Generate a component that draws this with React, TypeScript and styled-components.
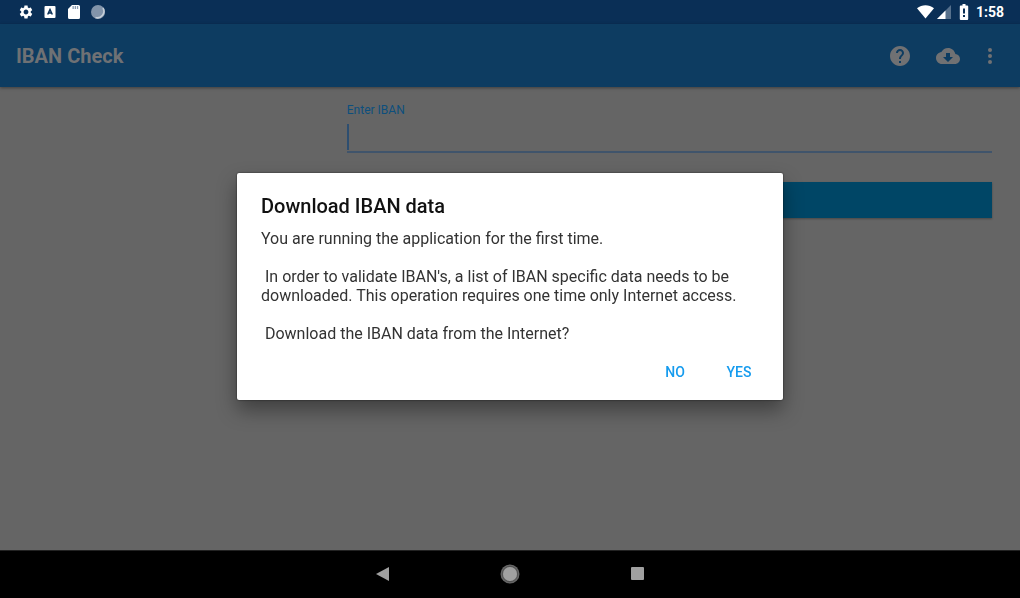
import React from "react";
import styled, { createGlobalStyle } from "styled-components";

const GlobalStyle = createGlobalStyle`
  *, *::before, *::after { box-sizing: border-box; }
  body {
    margin: 0;
    background: #656565;
    font-family: Roboto, "Liberation Sans", sans-serif;
  }
  button, input { font-family: inherit; }
`;

const Screen = styled.div`
  display: flex;
  flex-direction: column;
  min-height: 100vh;
`;

const StatusBar = styled.header`
  display: flex;
  align-items: center;
  justify-content: space-between;
  height: 24px;
  padding: 0 16px 0 18px;
  background: #0a2f56;
  color: #fff;
`;

const StatusGroup = styled.div<{ $gap: number }>`
  display: flex;
  align-items: center;
  gap: ${(p) => p.$gap}px;
`;

const Clock = styled.time`
  padding-left: 4px;
  font-size: 14px;
  font-weight: 700;
  line-height: 24px;
`;

const Icon = styled.svg`
  display: block;
  flex: none;
  fill: currentColor;
`;

const AppBar = styled.div`
  display: flex;
  align-items: center;
  justify-content: space-between;
  height: 63px;
  padding: 0 20px 0 16px;
  background: #0d3c61;
  color: #6f7174;
  box-shadow: 0 1px 3px rgba(0, 0, 0, 0.4);
`;

const AppTitle = styled.h1`
  margin: 0;
  font-size: 20px;
  font-weight: 700;
  line-height: 24px;
`;

const Actions = styled.div`
  display: flex;
  align-items: center;
  gap: 24px;
`;

const IconButton = styled.button<{ $narrow?: boolean }>`
  display: flex;
  align-items: center;
  justify-content: center;
  width: ${(p) => (p.$narrow ? 16 : 24)}px;
  height: 24px;
  padding: 0;
  border: 0;
  background: none;
  color: #707173;
`;

const Main = styled.main`
  flex: 1;
  padding: 15px 28px 16px 34%;
`;

const Field = styled.div`
  display: flex;
  flex-direction: column;
`;

const Label = styled.label`
  color: #0d4f7d;
  font-size: 12px;
  line-height: 16px;
`;

const InputLine = styled.div`
  display: flex;
  align-items: center;
  height: 35px;
  border-bottom: 2px solid #40546b;
`;

const Caret = styled.span`
  width: 2px;
  height: 26px;
  margin-top: 4px;
  background: #2d4e70;
`;

const TextInput = styled.input`
  flex: 1;
  min-width: 0;
  height: 32px;
  padding: 0;
  border: 0;
  outline: 0;
  background: none;
  color: #111;
  font-size: 18px;
`;

const CheckButton = styled.button`
  display: block;
  width: 100%;
  height: 36px;
  margin-top: 29px;
  border: 0;
  background: #004666;
  box-shadow: 0 1px 2px rgba(0, 0, 0, 0.3);
`;

const NavBar = styled.nav`
  display: flex;
  align-items: center;
  justify-content: center;
  gap: 104px;
  height: 48px;
  padding-bottom: 2px;
  border-top: 1px solid #222;
  background: #000;
`;

const Overlay = styled.div`
  position: fixed;
  inset: 24px 0 49px;
  display: flex;
  align-items: center;
  justify-content: center;
  padding: 16px;
`;

const Dialog = styled.section`
  width: 100%;
  max-width: 546px;
  padding: 20px 12px 10px 24px;
  border-radius: 2px;
  background: #fff;
  box-shadow: 0 0 2px rgba(0, 0, 0, 0.7), 0 10px 20px rgba(0, 0, 0, 0.38);
`;

const DialogTitle = styled.h2`
  margin: 0;
  color: #111;
  font-size: 20px;
  font-weight: 500;
  line-height: 26px;
`;

const Message = styled.p`
  margin: 10px 0 0;
  color: #333;
  font-size: 16px;
  line-height: 19px;
  white-space: pre-wrap;
`;

const DialogActions = styled.div`
  display: flex;
  justify-content: flex-end;
  margin-top: 11px;
`;

const DialogButton = styled.button`
  width: 64px;
  height: 36px;
  padding: 0;
  border: 0;
  background: none;
  color: #159bee;
  font-size: 14px;
  font-weight: 500;
`;

const MESSAGE = [
  "You are running the application for the first time.",
  " In order to validate IBAN's, a list of IBAN specific data needs to be downloaded. This operation requires one time only Internet access.",
  " Download the IBAN data from the Internet?",
].join("\n\n");

const GEAR =
  "M19.14 12.94c.04-.3.06-.61.06-.94 0-.32-.02-.64-.07-.94l2.03-1.58c.18-.14.23-.41.12-.61l-1.92-3.32c-.12-.22-.37-.29-.59-.22l-2.39.96c-.5-.38-1.03-.7-1.62-.94L14.4 2.81c-.04-.24-.24-.41-.48-.41h-3.84c-.24 0-.43.17-.47.41L9.25 5.35c-.59.24-1.13.57-1.62.94l-2.39-.96c-.22-.08-.47 0-.59.22L2.74 8.87c-.12.21-.08.47.12.61l2.03 1.58c-.05.3-.09.63-.09.94s.02.64.07.94l-2.03 1.58c-.18.14-.23.41-.12.61l1.92 3.32c.12.22.37.29.59.22l2.39-.96c.5.38 1.03.7 1.62.94l.36 2.54c.05.24.24.41.48.41h3.84c.24 0 .44-.17.47-.41l.36-2.54c.59-.24 1.13-.56 1.62-.94l2.39.96c.22.08.47 0 .59-.22l1.92-3.32c.12-.22.07-.47-.12-.61l-2.01-1.58zM12 15.6c-1.98 0-3.6-1.62-3.6-3.6s1.62-3.6 3.6-3.6 3.6 1.62 3.6 3.6-1.62 3.6-3.6 3.6z";

export default function App() {
  return (
    <>
      <GlobalStyle />
      <Screen>
        <StatusBar>
          <StatusGroup $gap={8}>
            <Icon width="16" height="16" viewBox="0 0 24 24">
              <path d={GEAR} />
            </Icon>
            <Icon width="16" height="16" viewBox="0 0 16 16">
              <rect x="2.5" y="2" width="11" height="12" rx="1" />
              <path d="M5.7 10.500 8 5.500 10.300 10.500M6.500 9h3" fill="none" stroke="#0a2f56" strokeWidth="1.500" />
            </Icon>
            <Icon width="16" height="16" viewBox="0 0 16 16">
              <path d="M6 1h6.500a1.500 1.500 0 0 1 1.500 1.500v11a1.500 1.500 0 0 1-1.500 1.500h-9A1.500 1.500 0 0 1 2 13.500V5z" />
              <path d="M6.500 2h1.300v3H6.500zM8.700 2H10v3H8.700zM10.900 2h1.300v3h-1.300z" fill="#8b9db2" />
            </Icon>
            <Icon width="16" height="16" viewBox="0 0 16 16">
              <circle cx="8" cy="8" r="7" fill="#8294aa" />
              <path d="M13 4a6.500 6.500 0 0 1-7.500 9.500" fill="none" stroke="#c5ced8" strokeWidth="1.600" />
            </Icon>
          </StatusGroup>
          <StatusGroup $gap={2}>
            <Icon width="18" height="16" viewBox="0 0 18 16">
              <path d="M1 4.200C6 .2 13 .2 18 4.200L9.500 14.500z" />
            </Icon>
            <Icon width="16" height="16" viewBox="0 0 16 16">
              <path d="M15 1v14H1z" fill="#56708c" />
              <path d="M9.500 6.500V15H1z" />
            </Icon>
            <Icon width="16" height="18" viewBox="0 0 16 18">
              <path d="M8.500 1h3v1.500h1.700q1 0 1 1V16q0 1-1 1H6.800q-1 0-1-1V3.500q0-1 1-1h1.700z" />
              <path d="M9 5.500h2v5H9zM9 12h2v2H9z" fill="#0a2f56" />
            </Icon>
            <Clock>1:58</Clock>
          </StatusGroup>
        </StatusBar>

        <AppBar>
          <AppTitle>IBAN Check</AppTitle>
          <Actions>
            <IconButton aria-label="Help">
              <Icon width="24" height="24" viewBox="0 0 24 24">
                <path d="M12 2C6.480 2 2 6.480 2 12s4.480 10 10 10 10-4.480 10-10S17.520 2 12 2zm1 17h-2v-2h2v2zm2.070-7.750-.9.920C13.450 12.900 13 13.500 13 15h-2v-.5c0-1.100.45-2.100 1.170-2.830l1.240-1.260c.37-.36.59-.86.59-1.410 0-1.100-.9-2-2-2s-2 .9-2 2H8c0-2.210 1.790-4 4-4s4 1.790 4 4c0 .88-.36 1.680-.93 2.250z" />
              </Icon>
            </IconButton>
            <IconButton aria-label="Download data">
              <Icon width="24" height="24" viewBox="0 0 24 24">
                <path d="M19.350 10.040C18.670 6.590 15.640 4 12 4 9.110 4 6.600 5.640 5.350 8.040 2.340 8.360 0 10.910 0 14c0 3.310 2.690 6 6 6h13c2.760 0 5-2.240 5-5 0-2.640-2.050-4.780-4.650-4.960zM17 13l-5 5-5-5h3V9h4v4h3z" />
              </Icon>
            </IconButton>
            <IconButton $narrow aria-label="More options">
              <Icon width="16" height="24" viewBox="4 0 16 24">
                <circle cx="10" cy="6" r="2" />
                <circle cx="10" cy="12" r="2" />
                <circle cx="10" cy="18" r="2" />
              </Icon>
            </IconButton>
          </Actions>
        </AppBar>

        <Main>
          <Field>
            <Label htmlFor="iban">Enter IBAN</Label>
            <InputLine>
              <Caret />
              <TextInput id="iban" type="text" />
            </InputLine>
          </Field>
          <CheckButton aria-label="Check IBAN" />
        </Main>

        <NavBar>
          <IconButton aria-label="Back">
            <Icon width="24" height="24" viewBox="0 0 24 24">
              <path d="M6 12 19 5v14z" fill="#a0a0a0" />
            </Icon>
          </IconButton>
          <IconButton aria-label="Home">
            <Icon width="24" height="24" viewBox="0 0 24 24">
              <circle cx="12" cy="12" r="9.500" fill="#666" />
              <circle cx="12" cy="12" r="7.700" fill="none" stroke="#505050" strokeWidth="1" />
              <circle cx="12" cy="12" r="7" fill="#a0a0a0" />
            </Icon>
          </IconButton>
          <IconButton aria-label="Recent apps">
            <Icon width="24" height="24" viewBox="0 0 24 24">
              <rect x="5" y="5" width="13" height="13" rx="1" fill="#a0a0a0" />
            </Icon>
          </IconButton>
        </NavBar>
      </Screen>

      <Overlay>
        <Dialog role="dialog" aria-modal="true" aria-labelledby="dialog-title">
          <DialogTitle id="dialog-title">Download IBAN data</DialogTitle>
          <Message>{MESSAGE}</Message>
          <DialogActions>
            <DialogButton>NO</DialogButton>
            <DialogButton>YES</DialogButton>
          </DialogActions>
        </Dialog>
      </Overlay>
    </>
  );
}
